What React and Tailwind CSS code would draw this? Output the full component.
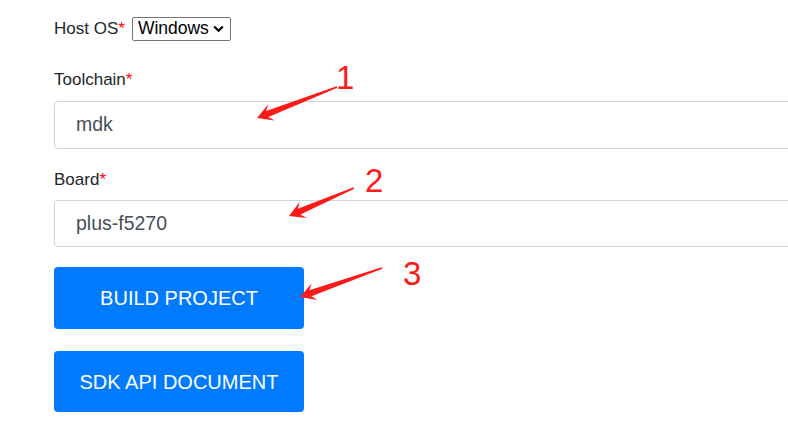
import React from "react";

function arrowPoints(tx, ty, px, py) {
  const dx = px - tx, dy = py - ty;
  const L = Math.hypot(dx, dy);
  const ux = dx / L, uy = dy / L;
  const nx = -uy, ny = ux;
  const pt = (back, side) => [px - ux * back + nx * side, py - uy * back + ny * side];
  const pts = [
    [tx + nx * 0.8, ty + ny * 0.8],
    pt(11, 3.2),
    pt(15.5, 8.8),
    [px, py],
    pt(15.5, -8.8),
    pt(11, -3.2),
    [tx - nx * 0.8, ty - ny * 0.8],
  ];
  return pts.map((p) => p.map((v) => v.toFixed(1)).join(",")).join(" ");
}

function Label({ children }) {
  return (
    <div className="text-[17px] leading-[24px] text-[#212529]">
      {children}
      <span className="text-[#ff0000]">*</span>
    </div>
  );
}

export default function App() {
  return (
    <div
      className="relative w-[788px] h-[447px] overflow-hidden bg-white"
      style={{ fontFamily: '"Liberation Sans", Arial, sans-serif' }}
    >
      <div className="flex flex-col pl-[54px] pt-[16px]">
        <div className="flex items-center h-[25px] text-[17px] text-[#212529]">
          <span>
            Host OS<span className="text-[#ff0000]">*</span>
          </span>
          <div className="ml-[7px] flex items-center h-[24px] w-[99px] border border-[#767676] rounded-[2px] pl-[5px] pr-[6px] text-[17.5px] text-black">
            <span className="flex-1">Windows</span>
            <svg width="11" height="8" viewBox="0 0 11 8" className="mt-[1px]">
              <path d="M1.2 1.5 L5.5 5.8 L9.8 1.5" fill="none" stroke="#000" strokeWidth="2.2" />
            </svg>
          </div>
        </div>

        <div className="mt-[27px]">
          <Label>Toolchain</Label>
        </div>
        <div className="mt-[9px] w-[780px] h-[48px] border border-[#ced4da] rounded-[4px] flex items-center pl-[21px] text-[19.5px] text-[#495057]">
          mdk
        </div>

        <div className="mt-[19px]">
          <Label>Board</Label>
        </div>
        <div className="mt-[8px] w-[780px] h-[47px] border border-[#ced4da] rounded-[4px] flex items-center pl-[21px] text-[19.5px] text-[#495057]">
          plus-f5270
        </div>

        <div className="mt-[20px] w-[250px] h-[62px] rounded-[4px] bg-[#007bff] flex items-center justify-center text-white text-[20px]">
          BUILD PROJECT
        </div>
        <div className="mt-[22px] w-[250px] h-[61px] rounded-[4px] bg-[#007bff] flex items-center justify-center text-white text-[20px]">
          SDK API DOCUMENT
        </div>
      </div>

      <svg
        className="absolute inset-0 pointer-events-none"
        width="788"
        height="447"
        viewBox="0 0 788 447"
      >
        <polygon points={arrowPoints(337, 87, 257, 118)} fill="#ff1a1a" />
        <polygon points={arrowPoints(354, 188, 289, 216)} fill="#ff1a1a" />
        <polygon points={arrowPoints(382, 268, 300, 297)} fill="#ff1a1a" />
        <text x="336" y="89" fontSize="33" fill="#ff1a1a" fontFamily='"Liberation Sans", Arial, sans-serif'>1</text>
        <text x="365" y="192" fontSize="33" fill="#ff1a1a" fontFamily='"Liberation Sans", Arial, sans-serif'>2</text>
        <text x="403" y="285" fontSize="33" fill="#ff1a1a" fontFamily='"Liberation Sans", Arial, sans-serif'>3</text>
      </svg>
    </div>
  );
}
